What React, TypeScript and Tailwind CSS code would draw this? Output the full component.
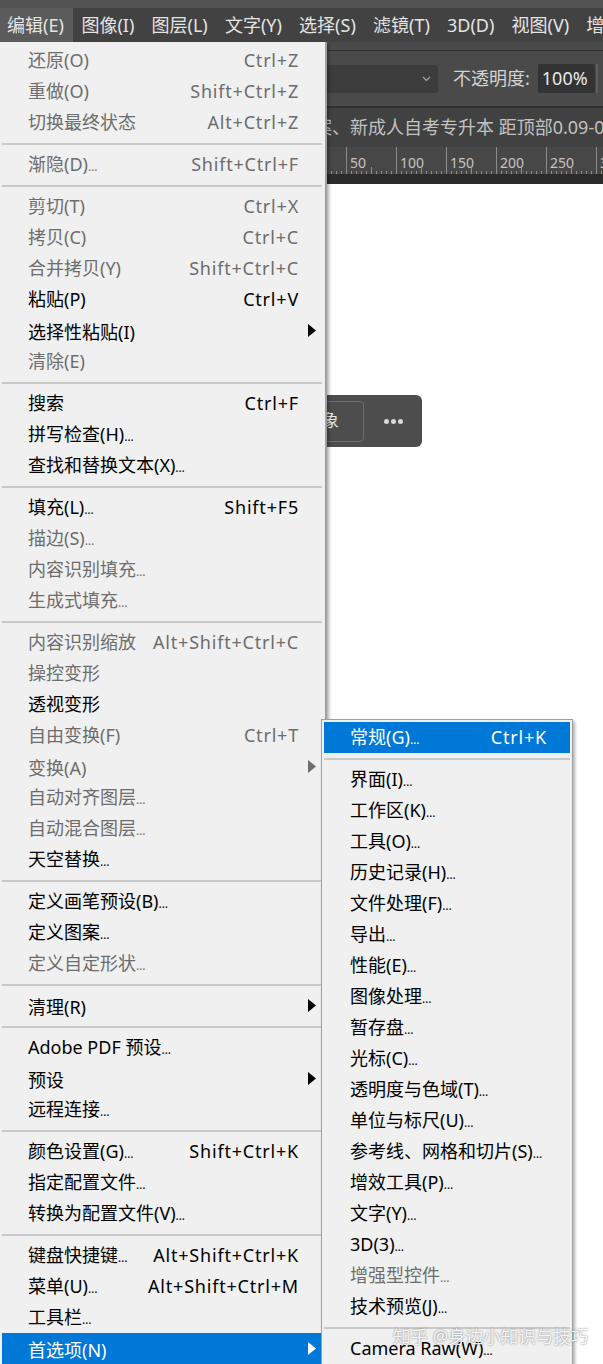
import React from 'react';

type MenuItem =
  | { label: string; shortcut?: string; disabled?: boolean; arrow?: boolean; active?: boolean }
  | 'sep';

const mainItems: MenuItem[] = [
  { label: '还原(O)', shortcut: 'Ctrl+Z', disabled: true },
  { label: '重做(O)', shortcut: 'Shift+Ctrl+Z', disabled: true },
  { label: '切换最终状态', shortcut: 'Alt+Ctrl+Z', disabled: true },
  'sep',
  { label: '渐隐(D)…', shortcut: 'Shift+Ctrl+F', disabled: true },
  'sep',
  { label: '剪切(T)', shortcut: 'Ctrl+X', disabled: true },
  { label: '拷贝(C)', shortcut: 'Ctrl+C', disabled: true },
  { label: '合并拷贝(Y)', shortcut: 'Shift+Ctrl+C', disabled: true },
  { label: '粘贴(P)', shortcut: 'Ctrl+V' },
  { label: '选择性粘贴(I)', arrow: true },
  { label: '清除(E)', disabled: true },
  'sep',
  { label: '搜索', shortcut: 'Ctrl+F' },
  { label: '拼写检查(H)…' },
  { label: '查找和替换文本(X)…' },
  'sep',
  { label: '填充(L)…', shortcut: 'Shift+F5' },
  { label: '描边(S)…', disabled: true },
  { label: '内容识别填充…', disabled: true },
  { label: '生成式填充…', disabled: true },
  'sep',
  { label: '内容识别缩放', shortcut: 'Alt+Shift+Ctrl+C', disabled: true },
  { label: '操控变形', disabled: true },
  { label: '透视变形' },
  { label: '自由变换(F)', shortcut: 'Ctrl+T', disabled: true },
  { label: '变换(A)', arrow: true, disabled: true },
  { label: '自动对齐图层…', disabled: true },
  { label: '自动混合图层…', disabled: true },
  { label: '天空替换…' },
  'sep',
  { label: '定义画笔预设(B)…' },
  { label: '定义图案…' },
  { label: '定义自定形状…', disabled: true },
  'sep',
  { label: '清理(R)', arrow: true },
  'sep',
  { label: 'Adobe PDF 预设…' },
  { label: '预设', arrow: true },
  { label: '远程连接…' },
  'sep',
  { label: '颜色设置(G)…', shortcut: 'Shift+Ctrl+K' },
  { label: '指定配置文件…' },
  { label: '转换为配置文件(V)…' },
  'sep',
  { label: '键盘快捷键…', shortcut: 'Alt+Shift+Ctrl+K' },
  { label: '菜单(U)…', shortcut: 'Alt+Shift+Ctrl+M' },
  { label: '工具栏…' },
  { label: '首选项(N)', arrow: true, active: true },
];

const subItems: MenuItem[] = [
  { label: '常规(G)…', shortcut: 'Ctrl+K', active: true },
  'sep',
  { label: '界面(I)…' },
  { label: '工作区(K)…' },
  { label: '工具(O)…' },
  { label: '历史记录(H)…' },
  { label: '文件处理(F)…' },
  { label: '导出…' },
  { label: '性能(E)…' },
  { label: '图像处理…' },
  { label: '暂存盘…' },
  { label: '光标(C)…' },
  { label: '透明度与色域(T)…' },
  { label: '单位与标尺(U)…' },
  { label: '参考线、网格和切片(S)…' },
  { label: '增效工具(P)…' },
  { label: '文字(Y)…' },
  { label: '3D(3)…' },
  { label: '增强型控件…', disabled: true },
  { label: '技术预览(J)…' },
  'sep',
  { label: 'Camera Raw(W)…' },
];

function Label({ text }: { text: string }) {
  if (text.endsWith('…')) {
    return (
      <>
        {text.slice(0, -1)}
        <span className="text-[12px]">…</span>
      </>
    );
  }
  return <>{text}</>;
}

function Row({ item }: { item: Exclude<MenuItem, 'sep'> }) {
  const color = item.active ? 'text-white' : item.disabled ? 'text-[#6d6d6d]' : 'text-black';
  const bg = item.active ? 'bg-[#0078d7]' : '';
  return (
    <div className={`flex h-[31px] items-center pl-[26px] ${bg} ${color}`}>
      <span className={`flex-1 whitespace-nowrap ${item.arrow ? 'translate-y-[2px]' : ''}`}>
        <Label text={item.label} />
      </span>
      {item.shortcut && <span className="whitespace-nowrap tracking-[0.8px]">{item.shortcut}</span>}
      <span className="flex h-full w-[23px] items-center pl-[9px]">
        {item.arrow && (
          <svg width="8" height="13" viewBox="0 0 8 13">
            <path d="M0 0L8 6.5L0 13Z" fill="currentColor" />
          </svg>
        )}
      </span>
    </div>
  );
}

function Sep() {
  return (
    <div className="flex h-[11px] items-center">
      <div className="h-[2px] w-full bg-[#c9c9c9]" />
    </div>
  );
}

function Menu({ items }: { items: MenuItem[] }) {
  return (
    <>
      {items.map((it, i) => (it === 'sep' ? <Sep key={i} /> : <Row key={i} item={it} />))}
    </>
  );
}

function Ruler() {
  const origin = 296;
  const ticks: React.ReactNode[] = [];
  for (let x = origin - 300; x <= 610; x += 5) {
    const v = x - origin;
    if (v % 50 === 0) {
      ticks.push(<line key={`t${x}`} x1={x + 0.5} y1={0} x2={x + 0.5} y2={27} stroke="#8c8c8c" strokeWidth={1} />);
      if (v > 0) {
        ticks.push(
          <text key={`l${x}`} x={x + 4} y={21} fontSize={14} fill="#c4c4c4" fontFamily="Noto Sans, sans-serif">
            {v}
          </text>
        );
      }
    } else if (v % 25 === 0) {
      ticks.push(<line key={`t${x}`} x1={x + 0.5} y1={20} x2={x + 0.5} y2={27} stroke="#8c8c8c" strokeWidth={1} />);
    } else {
      ticks.push(<line key={`t${x}`} x1={x + 0.5} y1={24} x2={x + 0.5} y2={27} stroke="#8c8c8c" strokeWidth={1} />);
    }
  }
  return (
    <svg width="603" height="27" className="block">
      {ticks}
    </svg>
  );
}

const menubar = ['编辑(E)', '图像(I)', '图层(L)', '文字(Y)', '选择(S)', '滤镜(T)', '3D(D)', '视图(V)', '增效工具'];

export default function App() {
  return (
    <div className="relative h-[1364px] w-[603px] overflow-hidden bg-white font-['Noto_Sans','Noto_Sans_CJK_SC',sans-serif] text-[18px]">
      {/* Photoshop chrome */}
      <div className="h-[8px] bg-[#535353]" />
      <div className="flex h-[34px] items-center whitespace-nowrap bg-[#424242] text-[#e4e4e4]">
        {menubar.map((m, i) => (
          <div
            key={m}
            className={`flex h-full items-center ${i === 0 ? 'bg-[#5b5b5b] pl-[7px] pr-[9px]' : 'px-[8.6px]'}`}
          >
            {m}
          </div>
        ))}
      </div>
      <div className="h-[8px] bg-[#4a4a4a]" />
      <div className="h-px bg-[#323232]" />
      <div className="flex h-[55px] items-center bg-[#4a4a4a] pl-[298px] whitespace-nowrap">
        <div className="flex h-[28px] w-[140px] items-center justify-end rounded-[3px] bg-[#3c3c3c] pr-[7px]">
          <svg width="9" height="6" viewBox="0 0 9 6">
            <path d="M1 1L4.5 4.5L8 1" fill="none" stroke="#a8a8a8" strokeWidth="1.2" />
          </svg>
        </div>
        <span className="ml-[15px] text-[#d4d4d4]">不透明度:</span>
        <div className="ml-[8px] flex h-[29px] w-[57px] items-center rounded-[2px] bg-[#333333] pl-[4px] text-[#e8e8e8]">
          100%
        </div>
        <div className="ml-[1px] h-[29px] w-[2px] bg-[#5e5e5e]" />
      </div>
      <div className="h-[2px] bg-[#2f2f2f]" />
      <div className="flex h-[39px] items-center overflow-hidden whitespace-nowrap bg-[#414141] pl-[314px] text-[#c2c2c2]">
        案、新成人自考专升本 距顶部0.09-0.15.psd @ 50%
      </div>
      <div className="bg-[#474747]">
        <Ruler />
      </div>
      <div className="h-[10px] bg-[#2b2b2b]" />

      {/* contextual task bar */}
      <div className="absolute left-[200px] top-[395px] flex h-[52px] w-[222px] items-center rounded-[6px] bg-[#4d4d4d] pl-[5px] pr-[19px]">
        <div className="flex h-[41px] flex-1 items-center justify-end rounded-[4px] border border-[#6e6e6e] pr-[24px] text-[17px] text-[#e8e8e8]">
          象
        </div>
        <div className="ml-[20px] flex items-center gap-[2px]">
          <span className="h-[5px] w-[5px] rounded-full bg-[#d8d8d8]" />
          <span className="h-[5px] w-[5px] rounded-full bg-[#d8d8d8]" />
          <span className="h-[5px] w-[5px] rounded-full bg-[#d8d8d8]" />
        </div>
      </div>

      {/* main edit menu */}
      <div className="absolute left-0 top-[42px] w-[327px] border-r-2 border-[#a0a0a0] bg-[#f0f0f0] pb-[4px] pl-[2px] pr-[3px] pt-[3px] shadow-[2px_2px_3px_rgba(0,0,0,0.3)]">
        <Menu items={mainItems} />
      </div>

      {/* preferences submenu */}
      <div className="absolute left-[321px] top-[719px] w-[252px] border border-[#a0a0a0] bg-[#f0f0f0] p-[2px] shadow-[2px_2px_3px_rgba(0,0,0,0.3)]">
        <Menu items={subItems} />
      </div>

      {/* watermark */}
      <div className="absolute left-[393px] top-[1323px] whitespace-nowrap text-[17.5px] text-white/90 [text-shadow:0_0_2px_rgba(0,0,0,0.55)]">
        知乎 @身边小知识与技巧
      </div>
    </div>
  );
}
